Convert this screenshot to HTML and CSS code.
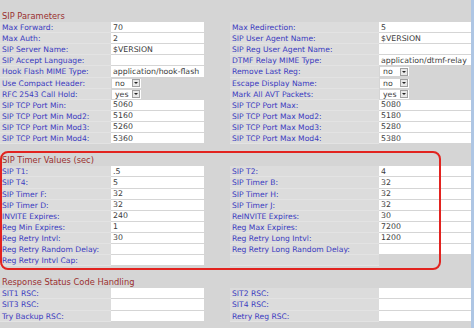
FILE: index.html
```html
<!DOCTYPE html>
<html lang="en">
<head>
    <meta charset="UTF-8">
    <title>SIP</title>
    <link rel="stylesheet" href="styles.css">
</head>
<body>
    <div class="page">
        <div class="panel">
            <div class="top"></div>

            <div class="section-title">SIP Parameters</div>
            <div class="row">
                <div class="lbl">Max Forward:</div><div class="val"><input value="70"></div>
                <div class="lbl">Max Redirection:</div><div class="val"><input value="5"></div>
            </div>
            <div class="row">
                <div class="lbl">Max Auth:</div><div class="val"><input value="2"></div>
                <div class="lbl">SIP User Agent Name:</div><div class="val"><input value="$VERSION"></div>
            </div>
            <div class="row">
                <div class="lbl">SIP Server Name:</div><div class="val"><input value="$VERSION"></div>
                <div class="lbl">SIP Reg User Agent Name:</div><div class="val"><input value=""></div>
            </div>
            <div class="row">
                <div class="lbl">SIP Accept Language:</div><div class="val"><input value=""></div>
                <div class="lbl">DTMF Relay MIME Type:</div><div class="val"><input value="application/dtmf-relay"></div>
            </div>
            <div class="row">
                <div class="lbl">Hook Flash MIME Type:</div><div class="val"><input value="application/hook-flash"></div>
                <div class="lbl">Remove Last Reg:</div><div class="val"><div class="select"><span>no</span><i class="btn"></i></div></div>
            </div>
            <div class="row">
                <div class="lbl">Use Compact Header:</div><div class="val"><div class="select"><span>no</span><i class="btn"></i></div></div>
                <div class="lbl">Escape Display Name:</div><div class="val"><div class="select"><span>no</span><i class="btn"></i></div></div>
            </div>
            <div class="row">
                <div class="lbl">RFC 2543 Call Hold:</div><div class="val"><div class="select"><span>yes</span><i class="btn"></i></div></div>
                <div class="lbl">Mark All AVT Packets:</div><div class="val"><div class="select"><span>yes</span><i class="btn"></i></div></div>
            </div>
            <div class="row">
                <div class="lbl">SIP TCP Port Min:</div><div class="val"><input value="5060"></div>
                <div class="lbl">SIP TCP Port Max:</div><div class="val"><input value="5080"></div>
            </div>
            <div class="row">
                <div class="lbl">SIP TCP Port Min Mod2:</div><div class="val"><input value="5160"></div>
                <div class="lbl">SIP TCP Port Max Mod2:</div><div class="val"><input value="5180"></div>
            </div>
            <div class="row">
                <div class="lbl">SIP TCP Port Min Mod3:</div><div class="val"><input value="5260"></div>
                <div class="lbl">SIP TCP Port Max Mod3:</div><div class="val"><input value="5280"></div>
            </div>
            <div class="row">
                <div class="lbl">SIP TCP Port Min Mod4:</div><div class="val"><input value="5360"></div>
                <div class="lbl">SIP TCP Port Max Mod4:</div><div class="val"><input value="5380"></div>
            </div>
            <div class="blank"></div>

            <div class="section-title">SIP Timer Values (sec)</div>
            <div class="row">
                <div class="lbl">SIP T1:</div><div class="val"><input value=".5"></div>
                <div class="lbl">SIP T2:</div><div class="val"><input value="4"></div>
            </div>
            <div class="row">
                <div class="lbl">SIP T4:</div><div class="val"><input value="5"></div>
                <div class="lbl">SIP Timer B:</div><div class="val"><input value="32"></div>
            </div>
            <div class="row">
                <div class="lbl">SIP Timer F:</div><div class="val"><input value="32"></div>
                <div class="lbl">SIP Timer H:</div><div class="val"><input value="32"></div>
            </div>
            <div class="row">
                <div class="lbl">SIP Timer D:</div><div class="val"><input value="32"></div>
                <div class="lbl">SIP Timer J:</div><div class="val"><input value="32"></div>
            </div>
            <div class="row">
                <div class="lbl">INVITE Expires:</div><div class="val"><input value="240"></div>
                <div class="lbl">ReINVITE Expires:</div><div class="val"><input value="30"></div>
            </div>
            <div class="row">
                <div class="lbl">Reg Min Expires:</div><div class="val"><input value="1"></div>
                <div class="lbl">Reg Max Expires:</div><div class="val"><input value="7200"></div>
            </div>
            <div class="row">
                <div class="lbl">Reg Retry Intvl:</div><div class="val"><input value="30"></div>
                <div class="lbl">Reg Retry Long Intvl:</div><div class="val"><input value="1200"></div>
            </div>
            <div class="row">
                <div class="lbl">Reg Retry Random Delay:</div><div class="val"><input value=""></div>
                <div class="lbl">Reg Retry Long Random Delay:</div><div class="val"><input value=""></div>
            </div>
            <div class="row">
                <div class="lbl">Reg Retry Intvl Cap:</div><div class="val"><input value=""></div>
                <div class="lbl"></div><div class="val"></div>
            </div>
            <div class="blank"></div>

            <div class="section-title">Response Status Code Handling</div>
            <div class="row">
                <div class="lbl">SIT1 RSC:</div><div class="val"><input value=""></div>
                <div class="lbl">SIT2 RSC:</div><div class="val"><input value=""></div>
            </div>
            <div class="row">
                <div class="lbl">SIT3 RSC:</div><div class="val"><input value=""></div>
                <div class="lbl">SIT4 RSC:</div><div class="val"><input value=""></div>
            </div>
            <div class="row">
                <div class="lbl">Try Backup RSC:</div><div class="val"><input value=""></div>
                <div class="lbl">Retry Reg RSC:</div><div class="val"><input value=""></div>
            </div>
        </div>
        <div class="edge"></div>
    </div>

    <!-- red marker drawn over the timer section -->
    <div class="mark"></div>
</body>
</html>
```

FILE: styles.css
```css
body {
    margin: 0;
    background-color: #d5d5d5;
    font-family: "DejaVu Sans", Tahoma, sans-serif;
}
.page {
    display: flex;
    height: 328px;
    overflow: hidden;
}
.panel {
    flex: 1;
    background-color: #d5d5d5;
}
.edge {
    width: 3px;
    background-color: #aec6e4;
}
.top {
    height: 11px;
}
.section-title {
    height: 11.1px;
    line-height: 11.1px;
    padding-left: 2px;
    font-size: 8.3px;
    color: #9a3030;
}
.blank {
    height: 11.1px;
}
.row {
    display: grid;
    grid-template-columns: 111px 119px 149px 92px;
    height: 11.1px;
}
.lbl {
    background-color: #dcdcdc;
    color: #3a3ac0;
    font-size: 7.6px;
    line-height: 11.1px;
    padding-left: 2px;
    white-space: nowrap;
    overflow: hidden;
    box-sizing: border-box;
    border-bottom: 1px solid #e3e3e3;
}
.val input {
    display: block;
    width: 93px;
    height: calc(100% - 1px);
    margin: 0;
    border: 0;
    padding: 0 2px;
    box-sizing: border-box;
    background-color: #fff;
    font-family: "DejaVu Sans", Tahoma, sans-serif;
    font-size: 7.8px;
    color: #3c3c3c;
    outline: none;
}
.row .val:last-child input {
    width: 92px;
}
.select {
    display: flex;
    align-items: center;
    justify-content: space-between;
    width: 29px;
    height: 9px;
    margin: 1px 0 0 1px;
    padding: 0 1px 0 3px;
    box-sizing: border-box;
    background-color: #fff;
    font-size: 7.8px;
    color: #3c3c3c;
}
.select .btn {
    position: relative;
    width: 8px;
    height: 8px;
    box-sizing: border-box;
    border: 1px solid #a0a0a0;
    background-color: #e8e8e8;
}
.select .btn::after {
    content: "";
    position: absolute;
    left: 1px;
    top: 2px;
    border-left: 2px solid transparent;
    border-right: 2px solid transparent;
    border-top: 2px solid #222;
}
.mark {
    position: absolute;
    left: 0;
    top: 151px;
    width: 441px;
    height: 119px;
    box-sizing: border-box;
    border: 2px solid #e2231f;
    border-radius: 8px;
    pointer-events: none;
}
```
